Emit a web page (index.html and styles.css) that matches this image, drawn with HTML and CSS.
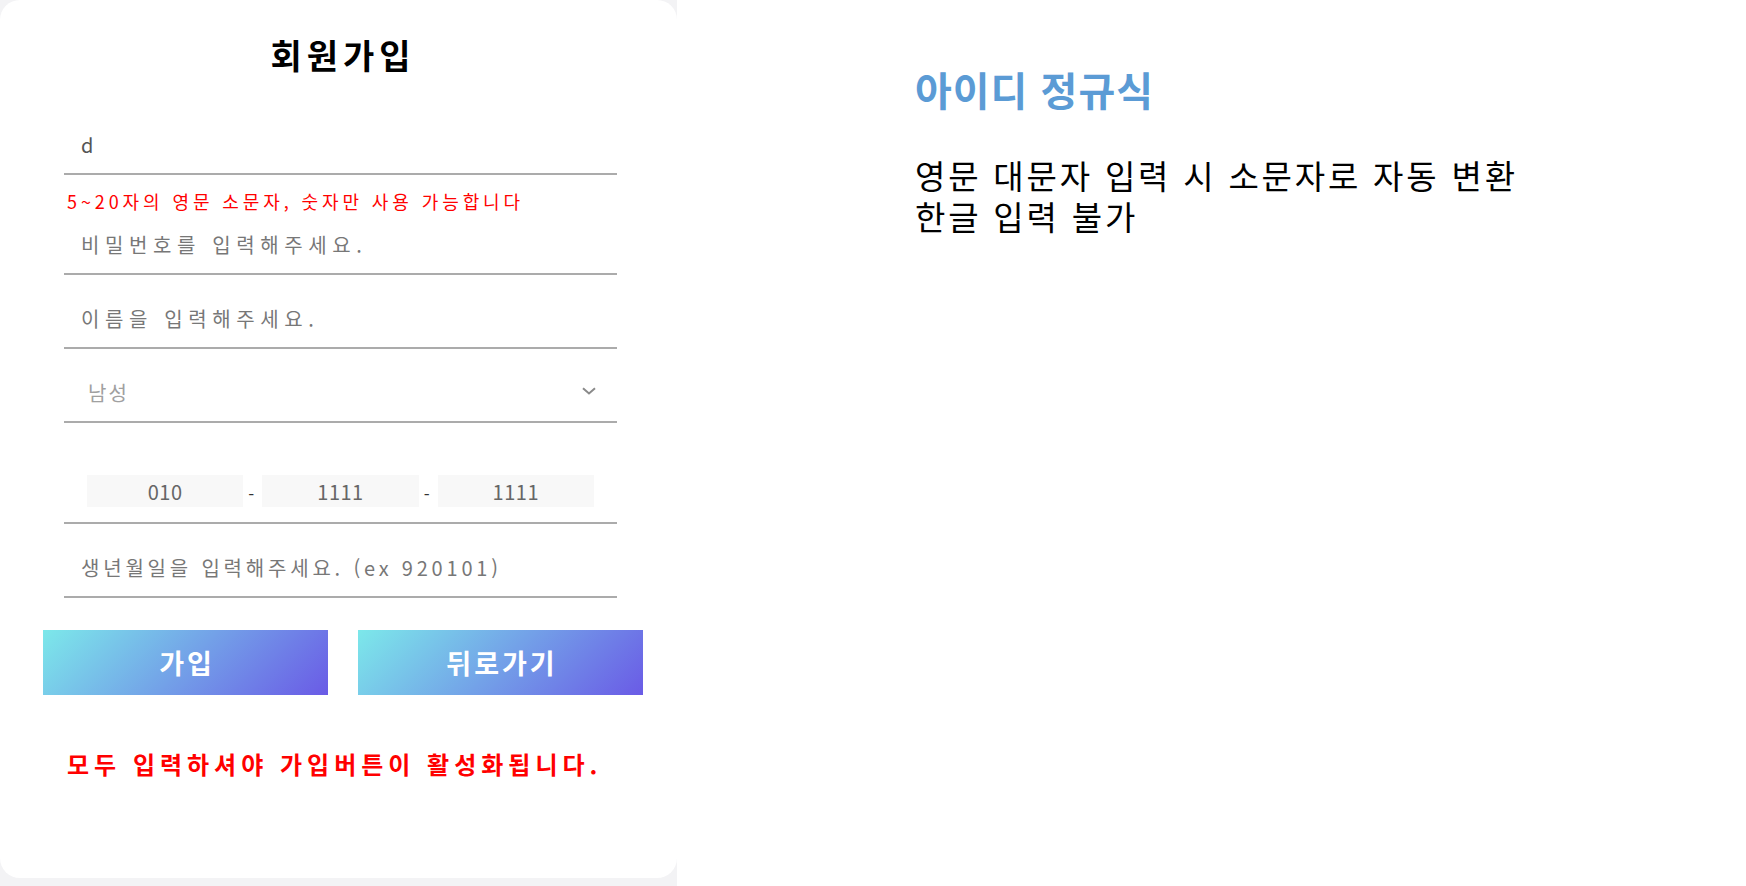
FILE: index.html
```html
<!DOCTYPE html>
<html lang="ko">
<head>
<meta charset="utf-8">
<title>회원가입</title>
<link rel="stylesheet" href="styles.css">
</head>
<body>
<div class="page">
  <div class="left">
    <div class="card">
      <h1 class="title">회원가입</h1>
      <form class="form">
        <div class="field"><input class="text-input" type="text" value="d"></div>
        <p class="error">5~20자의 영문 소문자, 숫자만 사용 가능합니다</p>
        <div class="field field-tight"><input class="text-input" type="password" placeholder="비밀번호를 입력해주세요."></div>
        <div class="field"><input class="text-input" type="text" placeholder="이름을 입력해주세요."></div>
        <div class="field select-field">
          <select class="select"><option>남성</option><option>여성</option></select>
          <svg class="chevron" width="14" height="8" viewBox="0 0 14 8"><path d="M1 1.2 L7 6.5 L13 1.2" fill="none" stroke="#8a8a8a" stroke-width="2"/></svg>
        </div>
        <div class="phone-row">
          <input class="phone" type="text" value="010">
          <span class="dash">-</span>
          <input class="phone" type="text" value="1111">
          <span class="dash">-</span>
          <input class="phone" type="text" value="1111">
        </div>
        <div class="field"><input class="text-input text-input-birth" type="text" placeholder="생년월일을 입력해주세요. (ex 920101)"></div>
        <div class="buttons">
          <button type="button" class="btn">가입</button>
          <button type="button" class="btn">뒤로가기</button>
        </div>
        <p class="notice">모두 입력하셔야 가입버튼이 활성화됩니다.</p>
      </form>
    </div>
  </div>
  <div class="right">
    <h2 class="rule-title">아이디 정규식</h2>
    <div class="rule-text">
      <p class="rule-line">영문 대문자 입력 시 소문자로 자동 변환</p>
      <p class="rule-line">한글 입력 불가</p>
    </div>
  </div>
</div>
</body>
</html>
```
FILE: styles.css
```css
html, body {
  margin: 0;
  padding: 0;
  background: #ffffff;
}
body {
  font-family: "Noto Sans CJK KR", "Noto Sans", sans-serif;
  color: #000;
}
.page {
  display: flex;
  height: 886px;
}
.left {
  width: 677px;
  flex: none;
  background: #f3f3f5;
  height: 886px;
}
.card {
  box-sizing: border-box;
  width: 677px;
  height: 878px;
  background: #ffffff;
  border-radius: 20px;
  padding: 35px 60px 0 64px;
}
.title {
  margin: 0 0 26px;
  padding-left: 5px;
  font-size: 34px;
  line-height: 40px;
  font-weight: 700;
  letter-spacing: 5px;
  text-align: center;
}
.form {
  margin: 0;
}
.field {
  position: relative;
  padding-top: 15px;
  border-bottom: 2px solid #ababab;
}
.field-tight {
  padding-top: 0;
}
.text-input {
  display: block;
  box-sizing: border-box;
  width: 100%;
  height: 57px;
  border: none;
  outline: none;
  background: transparent;
  padding: 0 0 0 17px;
  font-family: "Noto Sans CJK KR", "Noto Sans", sans-serif;
  font-size: 20px;
  letter-spacing: 5.6px;
  color: #555555;
}
.text-input-birth {
  letter-spacing: 3.8px;
}
.text-input::placeholder {
  color: #777777;
}
.error {
  margin: 16px 0 5px;
  padding-left: 3px;
  font-size: 18px;
  line-height: 20px;
  letter-spacing: 3.9px;
  color: #ff0000;
  white-space: nowrap;
}
.select {
  display: block;
  box-sizing: border-box;
  width: 100%;
  height: 57px;
  border: none;
  outline: none;
  background: transparent;
  -webkit-appearance: none;
  appearance: none;
  padding: 0 0 0 24px;
  font-family: "Noto Sans CJK KR", "Noto Sans", sans-serif;
  font-size: 20px;
  letter-spacing: 2px;
  color: #a0a0a0;
}
.chevron {
  position: absolute;
  right: 21px;
  top: 38px;
  pointer-events: none;
}
.phone-row {
  display: flex;
  align-items: center;
  padding: 52px 23px 15px;
  border-bottom: 2px solid #ababab;
}
.phone {
  flex: 1;
  min-width: 0;
  box-sizing: border-box;
  height: 32px;
  border: none;
  outline: none;
  background: #f8f8f8;
  text-align: center;
  font-family: "Noto Sans CJK KR", "Noto Sans", sans-serif;
  font-size: 20px;
  letter-spacing: 0.5px;
  color: #666666;
  padding: 0;
}
.dash {
  flex: none;
  box-sizing: border-box;
  width: 19px;
  padding-left: 5px;
  padding-top: 4px;
  font-size: 17px;
  color: #333333;
}
.buttons {
  display: flex;
  gap: 30px;
  margin: 32px -26px 0 -21px;
}
.btn {
  flex: 1;
  height: 65px;
  border: none;
  padding: 0 0 0 3px;
  background: linear-gradient(135deg, #7ce8ea 0%, #6a5be6 100%);
  color: #ffffff;
  font-family: "Noto Sans CJK KR", "Noto Sans", sans-serif;
  font-size: 27px;
  font-weight: 700;
  letter-spacing: 3px;
  cursor: pointer;
}
.notice {
  margin: 54px 0 0;
  padding-left: 3px;
  font-size: 24px;
  line-height: 30px;
  font-weight: 700;
  letter-spacing: 5px;
  color: #ff0000;
  white-space: nowrap;
}
.right {
  flex: 1;
  padding: 64px 0 0 238px;
}
.rule-title {
  margin: 0;
  font-size: 40px;
  line-height: 50px;
  font-weight: 700;
  letter-spacing: 1px;
  color: #5b9bd5;
}
.rule-text {
  margin: 41px 0 0;
}
.rule-line {
  margin: 0;
  height: 41px;
  font-size: 33px;
  line-height: 41px;
  letter-spacing: 2.8px;
  color: #000000;
  white-space: nowrap;
}
```
